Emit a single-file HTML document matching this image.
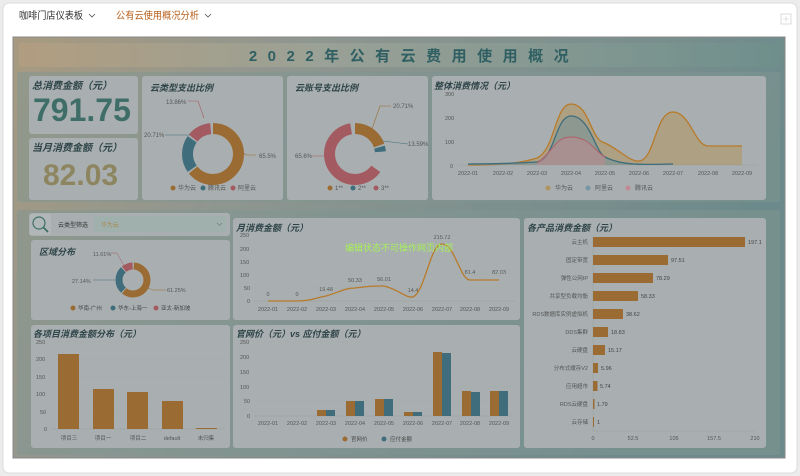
<!DOCTYPE html>
<html><head><meta charset="utf-8"><style>
html,body{margin:0;padding:0;width:800px;height:476px;overflow:hidden;background:#ececec;font-family:"Liberation Sans","Noto Sans CJK SC",sans-serif}
svg text{font-family:"Liberation Sans","Noto Sans CJK SC",sans-serif}
</style></head><body>
<svg width="800" height="476" viewBox="0 0 800 476" xmlns="http://www.w3.org/2000/svg">
<defs>
<linearGradient id="bg" x1="0" y1="0" x2="1" y2="0.3">
<stop offset="0" stop-color="#a89a80"/><stop offset="0.35" stop-color="#8f9690"/><stop offset="1" stop-color="#6c8a8b"/></linearGradient>
<linearGradient id="tb" x1="0" y1="0" x2="1" y2="0">
<stop offset="0" stop-color="#b19d80"/><stop offset="0.4" stop-color="#9aa196"/><stop offset="1" stop-color="#6f8f8c"/></linearGradient>
</defs>
<rect x="3" y="3" width="794" height="470" rx="6" fill="#fff" stroke="#dcdcdc"/>
<text x="19" y="19" font-size="10" fill="#333" textLength="64" lengthAdjust="spacingAndGlyphs">咖啡门店仪表板</text>
<path d="M89 14l3 3 3-3" stroke="#555" fill="none" stroke-width="0.8"/>
<text x="116" y="19" font-size="10" fill="#b8601c" textLength="83" lengthAdjust="spacingAndGlyphs">公有云使用概况分析</text>
<path d="M205 14l3 3 3-3" stroke="#555" fill="none" stroke-width="0.8"/>
<rect x="781" y="14" width="10" height="10" fill="none" stroke="#ccc" stroke-width="0.7"/>
<path d="M786 16v6M783 19h6" stroke="#ccc" stroke-width="0.6"/>

<rect x="13" y="37" width="772" height="421" fill="url(#bg)"/>
<rect x="13" y="37" width="772" height="421" fill="none" stroke="#888" stroke-width="1"/>
<rect x="19" y="43" width="760" height="24" rx="2" fill="url(#tb)"/>
<text x="414" y="61" font-size="15" font-weight="bold" fill="#2f5f62" text-anchor="middle" letter-spacing="10.5">2022年公有云费用使用概况</text>
<rect x="17" y="72" width="763" height="130" rx="2" fill="#7f9592" opacity="0.5"/>
<rect x="17" y="210" width="763" height="245" rx="2" fill="#7f9592" opacity="0.5"/>

<g fill="#a9afb0">
<rect x="29" y="76" width="109" height="58" rx="3"/>
<rect x="29" y="138" width="109" height="62" rx="3"/>
<rect x="142" y="76" width="141" height="124" rx="3"/>
<rect x="287" y="76" width="141" height="124" rx="3"/>
<rect x="432" y="76" width="334" height="124" rx="3"/>
<rect x="29" y="213" width="201" height="23" rx="3"/>
<rect x="31" y="240" width="199" height="80" rx="3"/>
<rect x="233" y="218" width="287" height="102" rx="3"/>
<rect x="31" y="325" width="199" height="123" rx="3"/>
<rect x="233" y="325" width="287" height="123" rx="3"/>
<rect x="524" y="218" width="242" height="230" rx="3"/>
</g>

<!-- KPI -->
<text x="32" y="89" font-size="10" font-style="italic" font-weight="bold" fill="#2e4448">总消费金额（元）</text>
<text x="33" y="121" font-size="32" font-weight="bold" fill="#3f6e69">791.75</text>
<text x="32" y="151" font-size="10" font-style="italic" font-weight="bold" fill="#2e4448">当月消费金额（元）</text>
<text x="43" y="185" font-size="30" font-weight="bold" fill="#8d8560">82.03</text>

<!-- pie1 -->
<text x="150" y="91" font-size="9" font-style="italic" font-weight="bold" fill="#2e4448">云类型支出比例</text>
<g transform="rotate(-90 213 154)" fill="none" stroke-width="11">
<circle cx="213" cy="154" r="25.5" pathLength="100" stroke="#9a6b33" stroke-dasharray="64.5 100" stroke-dashoffset="0"/>
<circle cx="213" cy="154" r="25.5" pathLength="100" stroke="#3f6d7c" stroke-dasharray="19.7 100" stroke-dashoffset="-65.5"/>
<circle cx="213" cy="154" r="25.5" pathLength="100" stroke="#a35a60" stroke-dasharray="12.8 100" stroke-dashoffset="-86.2"/>
</g>
<g font-size="6" fill="#555"><text x="166" y="104">13.86%</text><text x="144" y="137">20.71%</text><text x="259" y="158">65.5%</text></g>
<path d="M188 101h10l6 17" stroke="#a35a60" fill="none" stroke-width="0.6"/>
<path d="M165 135h25" stroke="#3f6d7c" fill="none" stroke-width="0.6"/>
<path d="M240 150l6 5h10" stroke="#9a6b33" fill="none" stroke-width="0.6"/>
<g font-size="6" fill="#555"><circle cx="173" cy="188" r="2.5" fill="#9a6b33"/><text x="178" y="190">华为云</text><circle cx="203" cy="188" r="2.5" fill="#3f6d7c"/><text x="208" y="190">腾讯云</text><circle cx="233" cy="188" r="2.5" fill="#a35a60"/><text x="238" y="190">阿里云</text></g>

<!-- pie2 -->
<text x="295" y="91" font-size="9" font-style="italic" font-weight="bold" fill="#2e4448">云账号支出比例</text>
<g transform="rotate(-90 355 154)" fill="none" stroke-width="11">
<circle cx="355" cy="154" r="25.5" pathLength="100" stroke="#9a6b33" stroke-dasharray="19.7 100" stroke-dashoffset="0"/>
<circle cx="355" cy="154" r="25.5" pathLength="100" stroke="#3f6d7c" stroke-dasharray="3 100" stroke-dashoffset="-20.7"/>
<circle cx="355" cy="154" r="25.5" pathLength="100" stroke="#a35a60" stroke-dasharray="63 100" stroke-dashoffset="-35"/>
</g>
<g font-size="6" fill="#555"><text x="393" y="108">20.71%</text><text x="408" y="146">13.59%</text><text x="295" y="158">65.6%</text></g>
<path d="M372 129l8-23h11" stroke="#9a6b33" fill="none" stroke-width="0.6"/>
<path d="M383 141l25 3" stroke="#3f6d7c" fill="none" stroke-width="0.6"/>
<path d="M312 156h17" stroke="#a35a60" fill="none" stroke-width="0.6"/>
<g font-size="6" fill="#555"><circle cx="330" cy="188" r="2.5" fill="#9a6b33"/><text x="335" y="190">1**</text><circle cx="353" cy="188" r="2.5" fill="#3f6d7c"/><text x="358" y="190">2**</text><circle cx="376" cy="188" r="2.5" fill="#a35a60"/><text x="381" y="190">3**</text></g>

<!-- overall line -->
<text x="434" y="89" font-size="9" font-style="italic" font-weight="bold" fill="#2e4448">整体消费情况（元）</text>
<g font-size="5.5" fill="#555">
<text x="445" y="96">300</text><text x="445" y="120">200</text><text x="445" y="144">100</text><text x="450" y="168">0</text>
<text x="468" y="175" text-anchor="middle">2022-01</text><text x="503" y="175" text-anchor="middle">2022-02</text><text x="537" y="175" text-anchor="middle">2022-03</text><text x="571" y="175" text-anchor="middle">2022-04</text><text x="605" y="175" text-anchor="middle">2022-05</text><text x="639" y="175" text-anchor="middle">2022-06</text><text x="673" y="175" text-anchor="middle">2022-07</text><text x="708" y="175" text-anchor="middle">2022-08</text><text x="742" y="175" text-anchor="middle">2022-09</text></g>
<path d="M458 165H758" stroke="#999" stroke-width="0.5"/>
<path d="M468 165C490 165 515 165 537 158C555 150 555 104 571 104C590 104 590 140 605 143C620 150 630 162 639 161C655 160 655 112 673 112C690 112 695 146 708 146H742V165H468Z" fill="#b0935f" opacity="0.55"/>
<path d="M468 165C490 165 515 165 537 158C555 150 555 104 571 104C590 104 590 140 605 143C620 150 630 162 639 161C655 160 655 112 673 112C690 112 695 146 708 146H742" fill="none" stroke="#b87a2a" stroke-width="1.3"/>
<path d="M468 164C500 164 520 163 537 162C555 160 555 116 571 116C590 116 595 152 605 157C620 165 640 165 673 164V165H468Z" fill="#6d8fa0" opacity="0.5"/>
<path d="M468 164C500 164 520 163 537 162C555 160 555 116 571 116C590 116 595 152 605 157C620 165 640 165 673 164" fill="none" stroke="#3f6d7c" stroke-width="1.3"/>
<path d="M537 163C555 150 555 137 571 137C590 137 595 152 605 157V165H537Z" fill="#c08a92" opacity="0.55"/>
<path d="M537 163C555 150 555 137 571 137C590 137 595 152 605 157" fill="none" stroke="#b06068" stroke-width="1"/>
<g font-size="6" fill="#555"><circle cx="548" cy="188" r="2.5" fill="#b0935f"/><text x="555" y="190">华为云</text><circle cx="588" cy="188" r="2.5" fill="#7696a4"/><text x="595" y="190">阿里云</text><circle cx="628" cy="188" r="2.5" fill="#c08a92"/><text x="635" y="190">腾讯云</text></g>

<!-- filter -->
<rect x="30" y="214" width="21" height="21" rx="2" fill="#b1b6b6"/>
<circle cx="39" cy="223" r="6" fill="none" stroke="#3e7068" stroke-width="1.2"/><path d="M43 227l5 5" stroke="#3e7068" stroke-width="1.8"/>
<text x="58" y="227" font-size="6" fill="#333">云类型筛选</text>
<rect x="94" y="216" width="132" height="16" fill="#9fb0ad"/>
<text x="101" y="227" font-size="6" fill="#a78a55">华为云</text>
<path d="M217 223l2.5 2.5 2.5-2.5" stroke="#777" fill="none" stroke-width="0.6"/>

<!-- region pie -->
<text x="39" y="255" font-size="9" font-style="italic" font-weight="bold" fill="#2e4448">区域分布</text>
<g transform="rotate(-90 133 280)" fill="none" stroke-width="7">
<circle cx="133" cy="280" r="14" pathLength="100" stroke="#9a6b33" stroke-dasharray="60.2 100" stroke-dashoffset="-1"/>
<circle cx="133" cy="280" r="14" pathLength="100" stroke="#3f6d7c" stroke-dasharray="26.1 100" stroke-dashoffset="-62.25"/>
<circle cx="133" cy="280" r="14" pathLength="100" stroke="#a35a60" stroke-dasharray="10.6 100" stroke-dashoffset="-89.4"/>
</g>
<g font-size="5.5" fill="#555"><text x="93" y="256">11.61%</text><text x="72" y="283">27.14%</text><text x="167" y="292">61.25%</text></g>
<path d="M111 253h6l8 15" stroke="#a35a60" fill="none" stroke-width="0.5"/>
<path d="M93 280h22" stroke="#3f6d7c" fill="none" stroke-width="0.5"/>
<path d="M148 288l5 2h13" stroke="#9a6b33" fill="none" stroke-width="0.5"/>
<g font-size="5.5" fill="#444"><circle cx="73" cy="308" r="2.5" fill="#9a6b33"/><text x="78" y="310">华南-广州</text><circle cx="113" cy="308" r="2.5" fill="#3f6d7c"/><text x="118" y="310">华东-上海一</text><circle cx="156" cy="308" r="2.5" fill="#a35a60"/><text x="161" y="310">亚太-新加坡</text></g>

<!-- month line -->
<text x="236" y="231" font-size="9" font-style="italic" font-weight="bold" fill="#2e4448">月消费金额（元）</text>
<g font-size="5.5" fill="#555"><text x="240" y="237">250</text><text x="240" y="251">200</text><text x="240" y="264">150</text><text x="240" y="277">100</text><text x="244" y="290">50</text><text x="247" y="303">0</text>
<text x="268" y="311" text-anchor="middle">2022-01</text><text x="297" y="311" text-anchor="middle">2022-02</text><text x="326" y="311" text-anchor="middle">2022-03</text><text x="355" y="311" text-anchor="middle">2022-04</text><text x="384" y="311" text-anchor="middle">2022-05</text><text x="413" y="311" text-anchor="middle">2022-06</text><text x="442" y="311" text-anchor="middle">2022-07</text><text x="470" y="311" text-anchor="middle">2022-08</text><text x="499" y="311" text-anchor="middle">2022-09</text>
<text x="268" y="296" text-anchor="middle">0</text><text x="297" y="296" text-anchor="middle">0</text><text x="326" y="291" text-anchor="middle">19.48</text><text x="355" y="282" text-anchor="middle">50.33</text><text x="384" y="281" text-anchor="middle">56.01</text><text x="413" y="292" text-anchor="middle">14.4</text><text x="442" y="239" text-anchor="middle">215.72</text><text x="470" y="274" text-anchor="middle">81.4</text><text x="499" y="274" text-anchor="middle">82.03</text></g>
<g stroke="#a4a9aa" stroke-width="0.4"><path d="M254 235H515M254 248H515M254 261H515M254 274H515M254 288H515"/></g>
<path d="M254 301H515" stroke="#999" stroke-width="0.5"/>
<path d="M268 301H297C310 301 315 298 326 296C340 292 345 288 355 288C370 286 375 286 384 286C400 290 405 298 413 297C425 292 430 244 442 244C455 244 460 280 470 280H499" fill="none" stroke="#b87a2a" stroke-width="1.3"/>
<text x="399" y="251" font-size="9" fill="#a6f05a" text-anchor="middle">编辑状态不可操作网页内部</text>

<!-- project bars -->
<text x="33" y="337" font-size="9" font-style="italic" font-weight="bold" fill="#2e4448">各项目消费金额分布（元）</text>
<g stroke="#a4a9aa" stroke-width="0.4"><path d="M52 342H225M52 359H225M52 377H225M52 394H225M52 412H225"/></g>
<path d="M52 429H225" stroke="#999" stroke-width="0.5"/>
<g font-size="5.5" fill="#555"><text x="36" y="344">250</text><text x="36" y="361">200</text><text x="36" y="379">150</text><text x="36" y="396">100</text><text x="40" y="414">50</text><text x="44" y="431">0</text>
<text x="69" y="440" text-anchor="middle">项目三</text><text x="103" y="440" text-anchor="middle">项目一</text><text x="138" y="440" text-anchor="middle">项目二</text><text x="172" y="440" text-anchor="middle">default</text><text x="206" y="440" text-anchor="middle">未归集</text></g>
<g fill="#9a6b33"><rect x="58" y="354" width="21" height="75"/><rect x="93" y="389" width="21" height="40"/><rect x="127" y="392" width="21" height="37"/><rect x="162" y="401" width="21" height="28"/><rect x="196" y="428" width="21" height="1"/></g>

<!-- grouped bars -->
<text x="236" y="337" font-size="9" font-style="italic" font-weight="bold" fill="#2e4448">官网价（元）vs 应付金额（元）</text>
<g stroke="#a4a9aa" stroke-width="0.4"><path d="M254 342H515M254 357H515M254 372H515M254 387H515M254 401H515"/></g>
<path d="M254 416H515" stroke="#999" stroke-width="0.5"/>
<g font-size="5.5" fill="#555"><text x="240" y="344">250</text><text x="240" y="359">200</text><text x="240" y="374">150</text><text x="240" y="389">100</text><text x="244" y="403">50</text><text x="247" y="418">0</text>
<text x="268" y="425" text-anchor="middle">2022-01</text><text x="297" y="425" text-anchor="middle">2022-02</text><text x="326" y="425" text-anchor="middle">2022-03</text><text x="355" y="425" text-anchor="middle">2022-04</text><text x="384" y="425" text-anchor="middle">2022-05</text><text x="413" y="425" text-anchor="middle">2022-06</text><text x="442" y="425" text-anchor="middle">2022-07</text><text x="470" y="425" text-anchor="middle">2022-08</text><text x="499" y="425" text-anchor="middle">2022-09</text></g>
<g fill="#9a6b33"><rect x="317" y="410" width="9" height="6"/><rect x="346" y="401" width="9" height="15"/><rect x="375" y="399" width="9" height="17"/><rect x="404" y="412" width="9" height="4"/><rect x="433" y="352" width="9" height="64"/><rect x="462" y="391" width="9" height="25"/><rect x="490" y="391" width="9" height="25"/></g>
<g fill="#3f6d7c"><rect x="326" y="410" width="9" height="6"/><rect x="355" y="401" width="9" height="15"/><rect x="384" y="399" width="9" height="17"/><rect x="413" y="412" width="9" height="4"/><rect x="442" y="353" width="9" height="63"/><rect x="471" y="392" width="9" height="24"/><rect x="499" y="391" width="9" height="25"/></g>
<g font-size="5.5" fill="#444"><circle cx="345" cy="439" r="2.5" fill="#9a6b33"/><text x="351" y="441">官网价</text><circle cx="384" cy="439" r="2.5" fill="#3f6d7c"/><text x="390" y="441">应付金额</text></g>

<!-- product hbars -->
<text x="527" y="231" font-size="9" font-style="italic" font-weight="bold" fill="#2e4448">各产品消费金额（元）</text>
<path d="M593 236V431H755" stroke="#999" stroke-width="0.5" fill="none"/>
<g font-size="5.5" fill="#555" text-anchor="end">
<text x="588" y="244">云主机</text><text x="588" y="262">固定带宽</text><text x="588" y="280">弹性公网IP</text><text x="588" y="298">共享型负载均衡</text><text x="588" y="316">RDS数据库实例虚拟机</text><text x="588" y="334">DDS集群</text><text x="588" y="352">云硬盘</text><text x="588" y="370">分布式缓存V2</text><text x="588" y="388">应用超市</text><text x="588" y="406">RDS云硬盘</text><text x="588" y="424">云存储</text></g>
<g fill="#9a6b33"><rect x="593" y="237" width="152" height="10"/><rect x="593" y="255" width="75" height="10"/><rect x="593" y="273" width="60" height="10"/><rect x="593" y="291" width="45" height="10"/><rect x="593" y="309" width="30" height="10"/><rect x="593" y="327" width="15" height="10"/><rect x="593" y="345" width="12" height="10"/><rect x="593" y="363" width="5" height="10"/><rect x="593" y="381" width="4.5" height="10"/><rect x="593" y="399" width="1.5" height="10"/><rect x="593" y="417" width="1" height="10"/></g>
<g font-size="5.5" fill="#444"><text x="748" y="244">197.1</text><text x="671" y="262">97.51</text><text x="656" y="280">78.29</text><text x="641" y="298">58.33</text><text x="626" y="316">38.62</text><text x="611" y="334">18.83</text><text x="608" y="352">15.17</text><text x="601" y="370">5.96</text><text x="600" y="388">5.74</text><text x="597" y="406">1.79</text><text x="597" y="424">1</text></g>
<g font-size="5.5" fill="#555" text-anchor="middle"><text x="593" y="440">0</text><text x="633" y="440">52.5</text><text x="674" y="440">105</text><text x="714" y="440">157.5</text><text x="755" y="440">210</text></g>
</svg>
</body></html>
